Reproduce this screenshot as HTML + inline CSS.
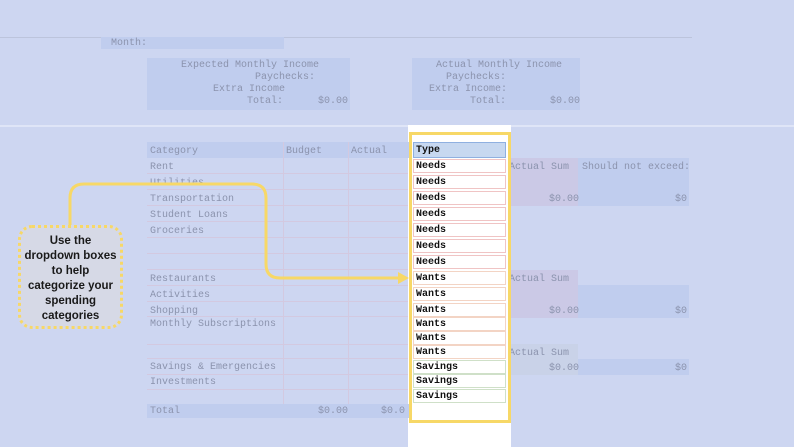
<!DOCTYPE html>
<html><head><style>
body{margin:0;width:794px;height:447px;background:#cdd6f1;position:relative;overflow:hidden;font-family:"Liberation Mono",monospace;font-size:10px;color:#8b93ad}
.a{position:absolute;white-space:nowrap;line-height:15px}
.c{position:absolute;background:#c0cdee}
.r{position:absolute;height:15px;border-bottom:1px solid #d3c9e0;box-sizing:border-box}
.t{position:absolute;left:413px;width:93px;height:14px;background:#fff;border:1px solid #f0c4c4;box-sizing:border-box;color:#111;font-size:10px;font-weight:bold;padding-left:2px;line-height:14px}
.w{border-color:#f3d4c4}.s{border-color:#cfe0c8}
</style></head><body>
<div class="a" style="left:0;top:37px;width:692px;height:1px;background:#bcc4dc"></div>
<div class="c" style="left:101px;top:37px;width:183px;height:12px"></div>
<div class="a" style="left:111px;top:36px">Month:</div>

<div class="c" style="left:147px;top:58px;width:203px;height:52px"></div>
<div class="a" style="left:181px;top:58px">Expected Monthly Income</div>
<div class="a" style="left:255px;top:70px">Paychecks:</div>
<div class="a" style="left:213px;top:82px">Extra Income</div>
<div class="a" style="left:247px;top:94px">Total:</div>
<div class="a" style="left:318px;top:94px">$0.00</div>
<div class="c" style="left:412px;top:58px;width:168px;height:52px"></div>
<div class="a" style="left:436px;top:58px">Actual Monthly Income</div>
<div class="a" style="left:446px;top:70px">Paychecks:</div>
<div class="a" style="left:429px;top:82px">Extra Income:</div>
<div class="a" style="left:470px;top:94px">Total:</div>
<div class="a" style="left:550px;top:94px">$0.00</div>

<div class="a" style="left:0;top:125px;width:794px;height:2px;background:#dfe5f7"></div>
<div class="a" style="left:408px;top:125px;width:103px;height:322px;background:#fff"></div>

<div class="c" style="left:147px;top:142px;width:263px;height:16px"></div>
<div class="a" style="left:150px;top:144px">Category</div>
<div class="a" style="left:286px;top:144px">Budget</div>
<div class="a" style="left:351px;top:144px">Actual</div>
<div class="a" style="left:283px;top:142px;width:1px;height:262px;background:#d3c9e0"></div>
<div class="a" style="left:348px;top:142px;width:1px;height:262px;background:#d3c9e0"></div>
<div class="r" style="left:147px;top:159px;width:261px"></div><div class="a" style="left:150px;top:160px">Rent</div>
<div class="r" style="left:147px;top:175px;width:261px"></div><div class="a" style="left:150px;top:176px">Utilities</div>
<div class="r" style="left:147px;top:191px;width:261px"></div><div class="a" style="left:150px;top:192px">Transportation</div>
<div class="r" style="left:147px;top:207px;width:261px"></div><div class="a" style="left:150px;top:208px">Student Loans</div>
<div class="r" style="left:147px;top:223px;width:261px"></div><div class="a" style="left:150px;top:224px">Groceries</div>
<div class="r" style="left:147px;top:239px;width:261px"></div>
<div class="r" style="left:147px;top:255px;width:261px"></div>
<div class="r" style="left:147px;top:271px;width:261px"></div><div class="a" style="left:150px;top:272px">Restaurants</div>
<div class="r" style="left:147px;top:287px;width:261px"></div><div class="a" style="left:150px;top:288px">Activities</div>
<div class="r" style="left:147px;top:303px;width:261px;height:14px"></div><div class="a" style="left:150px;top:304px">Shopping</div>
<div class="a" style="left:150px;top:317px">Monthly Subscriptions</div>
<div class="r" style="left:147px;top:331px;width:261px;height:14px"></div>
<div class="r" style="left:147px;top:345px;width:261px;height:14px"></div>
<div class="r" style="left:147px;top:360px;width:261px"></div><div class="a" style="left:150px;top:360px">Savings &amp; Emergencies</div>
<div class="r" style="left:147px;top:375px;width:261px"></div><div class="a" style="left:150px;top:375px">Investments</div>
<div class="c" style="left:147px;top:404px;width:263px;height:14px"></div>
<div class="a" style="left:150px;top:404px">Total</div>
<div class="a" style="left:318px;top:404px">$0.00</div>
<div class="a" style="left:381px;top:404px">$0.0</div>

<div class="a" style="left:508px;top:158px;width:70px;height:48px;background:#cbc9e6"></div>
<div class="c" style="left:578px;top:158px;width:111px;height:48px"></div>
<div class="a" style="left:509px;top:160px">Actual Sum</div>
<div class="a" style="left:582px;top:160px">Should not exceed:</div>
<div class="a" style="left:549px;top:192px">$0.00</div>
<div class="a" style="left:675px;top:192px">$0</div>
<div class="a" style="left:508px;top:270px;width:70px;height:48px;background:#cbc9e6"></div>
<div class="c" style="left:578px;top:285px;width:111px;height:33px"></div>
<div class="a" style="left:509px;top:272px">Actual Sum</div>
<div class="a" style="left:549px;top:304px">$0.00</div>
<div class="a" style="left:675px;top:304px">$0</div>
<div class="a" style="left:508px;top:344px;width:70px;height:31px;background:#c9d2e8"></div>
<div class="c" style="left:578px;top:359px;width:111px;height:16px"></div>
<div class="a" style="left:509px;top:346px">Actual Sum</div>
<div class="a" style="left:549px;top:361px">$0.00</div>
<div class="a" style="left:675px;top:361px">$0</div>

<div class="a" style="left:413px;top:142px;width:93px;height:16px;background:#c7d8f0;border:1px solid #8fb0e0;box-sizing:border-box;color:#111;font-weight:bold;padding-left:2px;line-height:16px">Type</div>
<div class="t" style="top:159px">Needs</div>
<div class="t" style="top:175px">Needs</div>
<div class="t" style="top:191px">Needs</div>
<div class="t" style="top:207px">Needs</div>
<div class="t" style="top:223px">Needs</div>
<div class="t" style="top:239px">Needs</div>
<div class="t" style="top:255px">Needs</div>
<div class="t w" style="top:271px">Wants</div>
<div class="t w" style="top:287px">Wants</div>
<div class="t w" style="top:303px">Wants</div>
<div class="t w" style="top:317px">Wants</div>
<div class="t w" style="top:331px">Wants</div>
<div class="t w" style="top:345px">Wants</div>
<div class="t s" style="top:360px">Savings</div>
<div class="t s" style="top:374px">Savings</div>
<div class="t s" style="top:389px">Savings</div>
<div class="a" style="left:409px;top:132px;width:102px;height:291px;border:3px solid #f7d867;box-sizing:border-box"></div>

<svg class="a" style="left:0;top:0" width="794" height="447">
<path d="M70 226 V198 Q70 184 84 184 H252 Q266 184 266 198 V264 Q266 278 280 278 H400" fill="none" stroke="#f7d867" stroke-width="3"/>
<path d="M398 272 L409 278 L398 284 Z" fill="#f7d867"/>
</svg>
<div class="a" style="left:18px;top:225px;width:105px;height:104px;border:3px dotted #f7d867;border-radius:14px;box-sizing:border-box;background:#d6d9e6;color:#1a1a1a;font-family:'Liberation Sans',sans-serif;font-weight:bold;font-size:11.5px;line-height:15px;text-align:center;padding-top:6px">Use the<br>dropdown boxes<br>to help<br>categorize your<br>spending<br>categories</div>
</body></html>
